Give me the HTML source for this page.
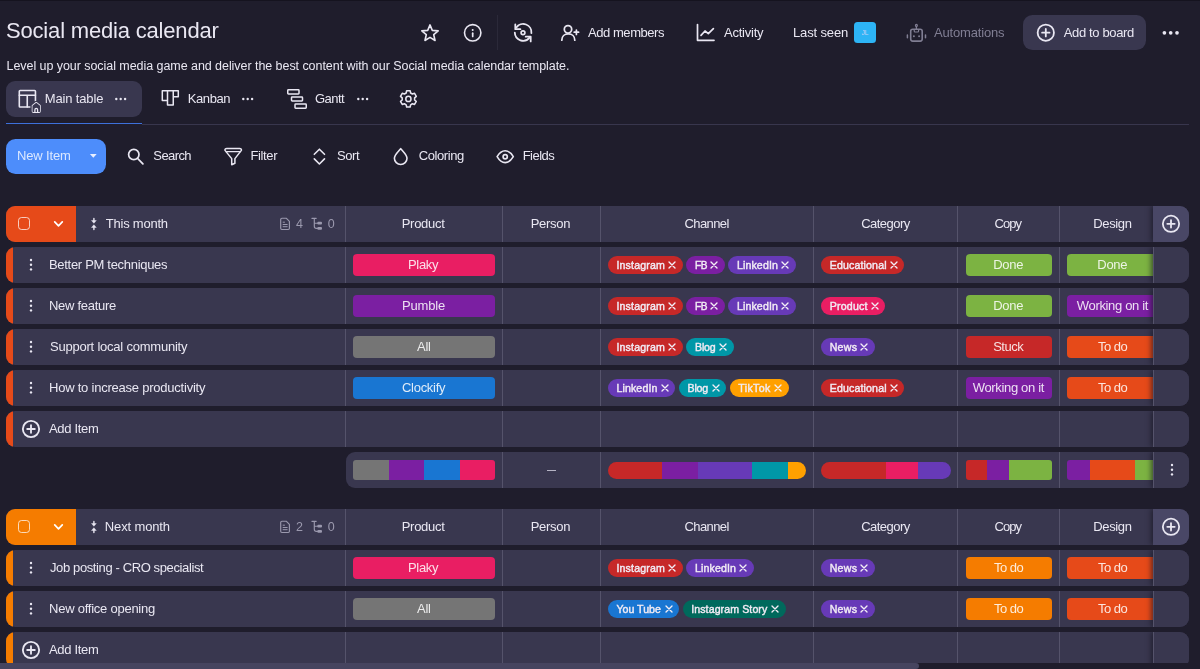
<!DOCTYPE html>
<html lang="en"><head><meta charset="utf-8"><title>Social media calendar</title>
<style>
*{box-sizing:border-box;margin:0;padding:0}
html,body{width:1200px;height:669px;overflow:hidden;background:#1f1d2c;}
body{position:relative;font-family:"Liberation Sans",sans-serif;color:#e9e7f2;-webkit-font-smoothing:antialiased}
.t{position:absolute;white-space:nowrap;display:block}
#w{position:absolute;left:0;top:0;width:1200px;height:669px;overflow:hidden;will-change:transform}
.i{position:absolute;overflow:visible}
.b{position:absolute}
.s{fill:none;stroke:#e9e7f2;stroke-width:1.6;stroke-linecap:round;stroke-linejoin:round}
.row{position:absolute;left:6px;width:1183px;height:36px;background:#39374f;border-radius:9px;overflow:hidden}
.sep{position:absolute;top:0;width:1px;height:36px;background:#55536b}
.pill{position:absolute;height:22px;border-radius:4px;top:7px}
.chip{position:absolute;height:18px;border-radius:9px;top:9px}
.lb{position:absolute;left:0;top:0;width:7.400px;height:36px}
.rc{position:absolute;left:1147px;top:0;width:36px;height:36px;background:#39374f;border-left:1px solid #55536b;box-shadow:-2px 0 5px rgba(20,18,32,.6)}
</style></head><body><div id="w">

<div class="b" style="left:0;top:0;width:1200px;height:1px;background:#15131f"></div>
<span id="title" class="t" style="left:6.00px;top:15.20px;font-size:22px;line-height:31px;color:#e9e7f2;font-weight:400;letter-spacing:-0.181px;">Social media calendar</span>
<div class="b" style="left:497px;top:15px;width:1px;height:35px;background:#2b2939"></div>
<span id="addm" class="t" style="left:588.00px;top:23.70px;font-size:13px;line-height:18px;color:#e9e7f2;font-weight:400;letter-spacing:-0.442px;">Add members</span>
<span id="activity" class="t" style="left:724.00px;top:23.70px;font-size:13px;line-height:18px;color:#e9e7f2;font-weight:400;letter-spacing:-0.239px;">Activity</span>
<span id="lastseen" class="t" style="left:793.00px;top:23.70px;font-size:13px;line-height:18px;color:#e9e7f2;font-weight:400;letter-spacing:-0.143px;">Last seen</span>
<div class="b" style="left:854.4px;top:21.9px;width:21.5px;height:21.6px;border-radius:3.500px;background:#2db4f5"></div>
<span id="jl" class="t" style="left:715.31px;width:300px;text-align:center;top:28.10px;font-size:6.5px;line-height:9px;color:#cfd3f7;font-weight:400;letter-spacing:0.000px;">JL</span>
<span id="autom" class="t" style="left:934.00px;top:23.70px;font-size:13px;line-height:18px;color:#807e93;font-weight:400;letter-spacing:-0.176px;">Automations</span>
<div class="b" style="left:1023.3px;top:15px;width:122.700px;height:35.200px;border-radius:9.500px;background:#39374f"></div>
<span id="addb" class="t" style="left:1063.80px;top:23.70px;font-size:13px;line-height:18px;color:#e9e7f2;font-weight:400;letter-spacing:-0.365px;">Add to board</span>
<span id="sub" class="t" style="left:6.50px;top:56.60px;font-size:12.5px;line-height:18px;color:#e9e7f2;font-weight:400;letter-spacing:-0.054px;">Level up your social media game and deliver the best content with our Social media calendar template.</span>
<div class="b" style="left:6px;top:81px;width:136px;height:36px;border-radius:9px;background:#39374f"></div>
<div class="b" style="left:142px;top:123.5px;width:1047px;height:1px;background:#38364d"></div>
<div class="b" style="left:6px;top:122.900px;width:136px;height:1.500px;background:#3d70db"></div>
<span id="maintable" class="t" style="left:44.70px;top:89.80px;font-size:13px;line-height:18px;color:#e9e7f2;font-weight:400;letter-spacing:-0.139px;">Main table</span>
<span id="kanban" class="t" style="left:187.80px;top:89.80px;font-size:13px;line-height:18px;color:#e9e7f2;font-weight:400;letter-spacing:-0.418px;">Kanban</span>
<span id="gantt" class="t" style="left:315.00px;top:89.80px;font-size:13px;line-height:18px;color:#e9e7f2;font-weight:400;letter-spacing:-0.546px;">Gantt</span>
<div class="b" style="left:6px;top:139px;width:99.700px;height:35.200px;border-radius:9.500px;background:#4d8dfb"></div>
<span id="newitem" class="t" style="left:17.00px;top:147.30px;font-size:13px;line-height:18px;color:#dbe8ff;font-weight:400;letter-spacing:-0.153px;">New Item</span>
<span id="search" class="t" style="left:153.30px;top:147.30px;font-size:13px;line-height:18px;color:#e9e7f2;font-weight:400;letter-spacing:-0.592px;">Search</span>
<span id="filter" class="t" style="left:250.50px;top:147.30px;font-size:13px;line-height:18px;color:#e9e7f2;font-weight:400;letter-spacing:-0.372px;">Filter</span>
<span id="sort" class="t" style="left:337.00px;top:147.30px;font-size:13px;line-height:18px;color:#e9e7f2;font-weight:400;letter-spacing:-0.410px;">Sort</span>
<span id="coloring" class="t" style="left:418.70px;top:147.30px;font-size:13px;line-height:18px;color:#e9e7f2;font-weight:400;letter-spacing:-0.412px;">Coloring</span>
<span id="fields" class="t" style="left:522.70px;top:147.30px;font-size:13px;line-height:18px;color:#e9e7f2;font-weight:400;letter-spacing:-0.535px;">Fields</span>
<div class="row" style="top:206px"><i class="lb" style="width:70px;background:#e64a19"></i><i class="sep" style="left:339px"></i><i class="sep" style="left:496px"></i><i class="sep" style="left:594px"></i><i class="sep" style="left:807px"></i><i class="sep" style="left:951px"></i><i class="sep" style="left:1053px"></i><div class="rc" style="background:#494766;border-left-color:#494766"></div></div>
<div class="b" style="left:17.600px;top:217.4px;width:12.800px;height:12.500px;border:1.300px solid rgba(255,255,255,.720);border-radius:3.500px"></div>
<span id="g1" class="t" style="left:105.80px;top:214.80px;font-size:13px;line-height:18px;color:#e9e7f2;font-weight:400;letter-spacing:-0.230px;">This month</span>
<span id="c2" class="t" style="left:296.00px;top:214.80px;font-size:12.5px;line-height:18px;color:#9b99ae;font-weight:400;letter-spacing:-0.054px;">4</span>
<span id="c3" class="t" style="left:327.80px;top:214.80px;font-size:12.5px;line-height:18px;color:#9b99ae;font-weight:400;letter-spacing:-0.054px;">0</span>
<span id="h4" class="t" style="left:273.18px;width:300px;text-align:center;top:214.80px;font-size:13px;line-height:18px;color:#e9e7f2;font-weight:400;letter-spacing:-0.248px;">Product</span>
<span id="h5" class="t" style="left:400.47px;width:300px;text-align:center;top:214.80px;font-size:13px;line-height:18px;color:#e9e7f2;font-weight:400;letter-spacing:-0.292px;">Person</span>
<span id="h6" class="t" style="left:556.65px;width:300px;text-align:center;top:214.80px;font-size:13px;line-height:18px;color:#e9e7f2;font-weight:400;letter-spacing:-0.590px;">Channel</span>
<span id="h7" class="t" style="left:735.48px;width:300px;text-align:center;top:214.80px;font-size:13px;line-height:18px;color:#e9e7f2;font-weight:400;letter-spacing:-0.536px;">Category</span>
<span id="h8" class="t" style="left:857.80px;width:300px;text-align:center;top:214.80px;font-size:13px;line-height:18px;color:#e9e7f2;font-weight:400;letter-spacing:-0.900px;">Copy</span>
<span id="h9" class="t" style="left:962.44px;width:300px;text-align:center;top:214.80px;font-size:13px;line-height:18px;color:#e9e7f2;font-weight:400;letter-spacing:-0.347px;">Design</span>
<div class="row" style="top:247px"><i class="lb" style="background:#e64a19"></i><i class="sep" style="left:339px"></i><i class="sep" style="left:496px"></i><i class="sep" style="left:594px"></i><i class="sep" style="left:807px"></i><i class="sep" style="left:951px"></i><i class="sep" style="left:1053px"></i><i class="pill" style="left:347px;width:142px;background:#e91e63"></i><i class="pill" style="left:959.5px;width:86.7px;background:#7cb342"></i><i class="pill" style="left:1061px;width:91px;background:#7cb342"></i><div class="rc"></div></div>

<span id="n10" class="t" style="left:49.00px;top:256.00px;font-size:13px;line-height:18px;color:#e9e7f2;font-weight:400;letter-spacing:-0.305px;">Better PM techniques</span>
<span id="p11" class="t" style="left:273.09px;width:300px;text-align:center;top:255.80px;font-size:13px;line-height:18px;color:rgba(255,255,255,.86);font-weight:400;letter-spacing:-0.322px;">Plaky</span>
<span id="s12" class="t" style="left:858.17px;width:300px;text-align:center;top:255.80px;font-size:13px;line-height:18px;color:rgba(255,255,255,.86);font-weight:400;letter-spacing:-0.283px;">Done</span>
<span id="s13" class="t" style="left:962.27px;width:300px;text-align:center;top:255.80px;font-size:13px;line-height:18px;color:rgba(255,255,255,.86);font-weight:400;letter-spacing:-0.283px;">Done</span>
<div class="b" style="left:607.7px;top:256.1px;width:75.1px;height:17.8px;border-radius:9px;background:#c62828"></div><span id="k14" class="t" style="left:616.40px;top:258.10px;font-size:10.6px;line-height:15px;color:#f1ebf4;font-weight:400;letter-spacing:0.165px;-webkit-text-stroke:.42px #f1ebf4;">Instagram</span><svg class="i" style="left:668.3000000000001px;top:261.1px" width="8" height="8" viewBox="0 0 8 8" ><path d="M1 1l6 6M7 1l-6 6" stroke="#f3eef6" stroke-width="1.350" stroke-linecap="round"/></svg><div class="b" style="left:686.3000000000001px;top:256.1px;width:38.4px;height:17.8px;border-radius:9px;background:#7b1fa2"></div><span id="k15" class="t" style="left:695.00px;top:258.60px;font-size:10.1px;line-height:14px;color:#f1ebf4;font-weight:400;letter-spacing:-0.400px;-webkit-text-stroke:.42px #f1ebf4;">FB</span><svg class="i" style="left:710.2px;top:261.1px" width="8" height="8" viewBox="0 0 8 8" ><path d="M1 1l6 6M7 1l-6 6" stroke="#f3eef6" stroke-width="1.350" stroke-linecap="round"/></svg><div class="b" style="left:728.2px;top:256.1px;width:67.6px;height:17.8px;border-radius:9px;background:#673ab7"></div><span id="k16" class="t" style="left:736.90px;top:258.10px;font-size:10.6px;line-height:15px;color:#f1ebf4;font-weight:400;letter-spacing:0.134px;-webkit-text-stroke:.42px #f1ebf4;">LinkedIn</span><svg class="i" style="left:781.3000000000001px;top:261.1px" width="8" height="8" viewBox="0 0 8 8" ><path d="M1 1l6 6M7 1l-6 6" stroke="#f3eef6" stroke-width="1.350" stroke-linecap="round"/></svg>
<div class="b" style="left:821px;top:256.1px;width:83px;height:17.8px;border-radius:9px;background:#c62828"></div><span id="k17" class="t" style="left:829.70px;top:258.10px;font-size:10.6px;line-height:15px;color:#f1ebf4;font-weight:400;letter-spacing:0.149px;-webkit-text-stroke:.42px #f1ebf4;">Educational</span><svg class="i" style="left:889.5px;top:261.1px" width="8" height="8" viewBox="0 0 8 8" ><path d="M1 1l6 6M7 1l-6 6" stroke="#f3eef6" stroke-width="1.350" stroke-linecap="round"/></svg>
<div class="row" style="top:288px"><i class="lb" style="background:#e64a19"></i><i class="sep" style="left:339px"></i><i class="sep" style="left:496px"></i><i class="sep" style="left:594px"></i><i class="sep" style="left:807px"></i><i class="sep" style="left:951px"></i><i class="sep" style="left:1053px"></i><i class="pill" style="left:347px;width:142px;background:#7b1fa2"></i><i class="pill" style="left:959.5px;width:86.7px;background:#7cb342"></i><i class="pill" style="left:1061px;width:91px;background:#7b1fa2"></i><div class="rc"></div></div>

<span id="n18" class="t" style="left:49.00px;top:297.00px;font-size:13px;line-height:18px;color:#e9e7f2;font-weight:400;letter-spacing:-0.286px;">New feature</span>
<span id="p19" class="t" style="left:273.53px;width:300px;text-align:center;top:296.80px;font-size:13px;line-height:18px;color:rgba(255,255,255,.86);font-weight:400;letter-spacing:-0.170px;">Pumble</span>
<span id="s20" class="t" style="left:858.17px;width:300px;text-align:center;top:296.80px;font-size:13px;line-height:18px;color:rgba(255,255,255,.86);font-weight:400;letter-spacing:-0.283px;">Done</span>
<span id="s21" class="t" style="left:962.44px;width:300px;text-align:center;top:296.80px;font-size:13px;line-height:18px;color:rgba(255,255,255,.86);font-weight:400;letter-spacing:-0.335px;clip-path:inset(0 110px 0 0);">Working on it</span>
<div class="b" style="left:607.7px;top:297.1px;width:75.1px;height:17.8px;border-radius:9px;background:#c62828"></div><span id="k22" class="t" style="left:616.40px;top:299.10px;font-size:10.6px;line-height:15px;color:#f1ebf4;font-weight:400;letter-spacing:0.165px;-webkit-text-stroke:.42px #f1ebf4;">Instagram</span><svg class="i" style="left:668.3000000000001px;top:302.1px" width="8" height="8" viewBox="0 0 8 8" ><path d="M1 1l6 6M7 1l-6 6" stroke="#f3eef6" stroke-width="1.350" stroke-linecap="round"/></svg><div class="b" style="left:686.3000000000001px;top:297.1px;width:38.4px;height:17.8px;border-radius:9px;background:#7b1fa2"></div><span id="k23" class="t" style="left:695.00px;top:299.60px;font-size:10.1px;line-height:14px;color:#f1ebf4;font-weight:400;letter-spacing:-0.400px;-webkit-text-stroke:.42px #f1ebf4;">FB</span><svg class="i" style="left:710.2px;top:302.1px" width="8" height="8" viewBox="0 0 8 8" ><path d="M1 1l6 6M7 1l-6 6" stroke="#f3eef6" stroke-width="1.350" stroke-linecap="round"/></svg><div class="b" style="left:728.2px;top:297.1px;width:67.6px;height:17.8px;border-radius:9px;background:#673ab7"></div><span id="k24" class="t" style="left:736.90px;top:299.10px;font-size:10.6px;line-height:15px;color:#f1ebf4;font-weight:400;letter-spacing:0.134px;-webkit-text-stroke:.42px #f1ebf4;">LinkedIn</span><svg class="i" style="left:781.3000000000001px;top:302.1px" width="8" height="8" viewBox="0 0 8 8" ><path d="M1 1l6 6M7 1l-6 6" stroke="#f3eef6" stroke-width="1.350" stroke-linecap="round"/></svg>
<div class="b" style="left:821px;top:297.1px;width:64.4px;height:17.8px;border-radius:9px;background:#e91e63"></div><span id="k25" class="t" style="left:829.70px;top:299.10px;font-size:10.6px;line-height:15px;color:#f1ebf4;font-weight:400;letter-spacing:0.222px;-webkit-text-stroke:.42px #f1ebf4;">Product</span><svg class="i" style="left:870.9px;top:302.1px" width="8" height="8" viewBox="0 0 8 8" ><path d="M1 1l6 6M7 1l-6 6" stroke="#f3eef6" stroke-width="1.350" stroke-linecap="round"/></svg>
<div class="row" style="top:329px"><i class="lb" style="background:#e64a19"></i><i class="sep" style="left:339px"></i><i class="sep" style="left:496px"></i><i class="sep" style="left:594px"></i><i class="sep" style="left:807px"></i><i class="sep" style="left:951px"></i><i class="sep" style="left:1053px"></i><i class="pill" style="left:347px;width:142px;background:#757575"></i><i class="pill" style="left:959.5px;width:86.7px;background:#c62828"></i><i class="pill" style="left:1061px;width:91px;background:#e64a19"></i><div class="rc"></div></div>

<span id="n26" class="t" style="left:50.00px;top:338.00px;font-size:13px;line-height:18px;color:#e9e7f2;font-weight:400;letter-spacing:-0.220px;">Support local community</span>
<span id="p27" class="t" style="left:273.80px;width:300px;text-align:center;top:337.80px;font-size:13px;line-height:18px;color:rgba(255,255,255,.86);font-weight:400;letter-spacing:-0.280px;">All</span>
<span id="s28" class="t" style="left:858.20px;width:300px;text-align:center;top:337.80px;font-size:13px;line-height:18px;color:rgba(255,255,255,.86);font-weight:400;letter-spacing:-0.503px;">Stuck</span>
<span id="s29" class="t" style="left:962.66px;width:300px;text-align:center;top:337.80px;font-size:13px;line-height:18px;color:rgba(255,255,255,.86);font-weight:400;letter-spacing:-0.518px;">To do</span>
<div class="b" style="left:607.7px;top:338.1px;width:75.1px;height:17.8px;border-radius:9px;background:#c62828"></div><span id="k30" class="t" style="left:616.40px;top:340.10px;font-size:10.6px;line-height:15px;color:#f1ebf4;font-weight:400;letter-spacing:0.165px;-webkit-text-stroke:.42px #f1ebf4;">Instagram</span><svg class="i" style="left:668.3000000000001px;top:343.1px" width="8" height="8" viewBox="0 0 8 8" ><path d="M1 1l6 6M7 1l-6 6" stroke="#f3eef6" stroke-width="1.350" stroke-linecap="round"/></svg><div class="b" style="left:686.3000000000001px;top:338.1px;width:47.3px;height:17.8px;border-radius:9px;background:#0097a7"></div><span id="k31" class="t" style="left:695.00px;top:340.10px;font-size:10.6px;line-height:15px;color:#f1ebf4;font-weight:400;letter-spacing:-0.170px;-webkit-text-stroke:.42px #f1ebf4;">Blog</span><svg class="i" style="left:719.1px;top:343.1px" width="8" height="8" viewBox="0 0 8 8" ><path d="M1 1l6 6M7 1l-6 6" stroke="#f3eef6" stroke-width="1.350" stroke-linecap="round"/></svg>
<div class="b" style="left:821px;top:338.1px;width:53.5px;height:17.8px;border-radius:9px;background:#673ab7"></div><span id="k32" class="t" style="left:829.70px;top:340.10px;font-size:10.6px;line-height:15px;color:#f1ebf4;font-weight:400;letter-spacing:0.269px;-webkit-text-stroke:.42px #f1ebf4;">News</span><svg class="i" style="left:860.0px;top:343.1px" width="8" height="8" viewBox="0 0 8 8" ><path d="M1 1l6 6M7 1l-6 6" stroke="#f3eef6" stroke-width="1.350" stroke-linecap="round"/></svg>
<div class="row" style="top:370px"><i class="lb" style="background:#e64a19"></i><i class="sep" style="left:339px"></i><i class="sep" style="left:496px"></i><i class="sep" style="left:594px"></i><i class="sep" style="left:807px"></i><i class="sep" style="left:951px"></i><i class="sep" style="left:1053px"></i><i class="pill" style="left:347px;width:142px;background:#1976d2"></i><i class="pill" style="left:959.5px;width:86.7px;background:#7b1fa2"></i><i class="pill" style="left:1061px;width:91px;background:#e64a19"></i><div class="rc"></div></div>

<span id="n33" class="t" style="left:49.00px;top:379.00px;font-size:13px;line-height:18px;color:#e9e7f2;font-weight:400;letter-spacing:-0.225px;">How to increase productivity</span>
<span id="p34" class="t" style="left:273.61px;width:300px;text-align:center;top:378.80px;font-size:13px;line-height:18px;color:rgba(255,255,255,.86);font-weight:400;letter-spacing:-0.287px;">Clockify</span>
<span id="s35" class="t" style="left:858.34px;width:300px;text-align:center;top:378.80px;font-size:13px;line-height:18px;color:rgba(255,255,255,.86);font-weight:400;letter-spacing:-0.335px;">Working on it</span>
<span id="s36" class="t" style="left:962.66px;width:300px;text-align:center;top:378.80px;font-size:13px;line-height:18px;color:rgba(255,255,255,.86);font-weight:400;letter-spacing:-0.518px;">To do</span>
<div class="b" style="left:607.7px;top:379.1px;width:67.6px;height:17.8px;border-radius:9px;background:#673ab7"></div><span id="k37" class="t" style="left:616.40px;top:381.10px;font-size:10.6px;line-height:15px;color:#f1ebf4;font-weight:400;letter-spacing:0.134px;-webkit-text-stroke:.42px #f1ebf4;">LinkedIn</span><svg class="i" style="left:660.8000000000001px;top:384.1px" width="8" height="8" viewBox="0 0 8 8" ><path d="M1 1l6 6M7 1l-6 6" stroke="#f3eef6" stroke-width="1.350" stroke-linecap="round"/></svg><div class="b" style="left:678.8000000000001px;top:379.1px;width:47.3px;height:17.8px;border-radius:9px;background:#0097a7"></div><span id="k38" class="t" style="left:687.50px;top:381.10px;font-size:10.6px;line-height:15px;color:#f1ebf4;font-weight:400;letter-spacing:-0.170px;-webkit-text-stroke:.42px #f1ebf4;">Blog</span><svg class="i" style="left:711.6px;top:384.1px" width="8" height="8" viewBox="0 0 8 8" ><path d="M1 1l6 6M7 1l-6 6" stroke="#f3eef6" stroke-width="1.350" stroke-linecap="round"/></svg><div class="b" style="left:729.6px;top:379.1px;width:59.2px;height:17.8px;border-radius:9px;background:#ffa000"></div><span id="k39" class="t" style="left:738.30px;top:381.10px;font-size:10.6px;line-height:15px;color:#f1ebf4;font-weight:400;letter-spacing:0.357px;-webkit-text-stroke:.42px #f1ebf4;">TikTok</span><svg class="i" style="left:774.3000000000001px;top:384.1px" width="8" height="8" viewBox="0 0 8 8" ><path d="M1 1l6 6M7 1l-6 6" stroke="#f3eef6" stroke-width="1.350" stroke-linecap="round"/></svg>
<div class="b" style="left:821px;top:379.1px;width:83px;height:17.8px;border-radius:9px;background:#c62828"></div><span id="k40" class="t" style="left:829.70px;top:381.10px;font-size:10.6px;line-height:15px;color:#f1ebf4;font-weight:400;letter-spacing:0.149px;-webkit-text-stroke:.42px #f1ebf4;">Educational</span><svg class="i" style="left:889.5px;top:384.1px" width="8" height="8" viewBox="0 0 8 8" ><path d="M1 1l6 6M7 1l-6 6" stroke="#f3eef6" stroke-width="1.350" stroke-linecap="round"/></svg>
<div class="row" style="top:411px"><i class="lb" style="background:#e64a19"></i><i class="sep" style="left:339px"></i><i class="sep" style="left:496px"></i><i class="sep" style="left:594px"></i><i class="sep" style="left:807px"></i><i class="sep" style="left:951px"></i><i class="sep" style="left:1053px"></i><div class="rc"></div></div>
<span id="a41" class="t" style="left:49.00px;top:420.00px;font-size:13px;line-height:18px;color:#e9e7f2;font-weight:400;letter-spacing:-0.314px;">Add Item</span>
<div class="row" style="top:452px;left:346px;width:843px"><i class="sep" style="left:156px"></i><i class="sep" style="left:254px"></i><i class="sep" style="left:467px"></i><i class="sep" style="left:611px"></i><i class="sep" style="left:713px"></i><div style="position:absolute;left:721px;top:8px;width:91px;height:20px;border-radius:3px;overflow:hidden;display:flex"><i style="flex:1;background:#7b1fa2"></i><i style="flex:2;background:#e64a19"></i><i style="flex:1;background:#7cb342"></i></div><div class="rc" style="left:807px"></div></div>
<div class="b" style="left:353px;top:460px;width:142px;height:20px;border-radius:3px;overflow:hidden;display:flex"><i style="flex:1;background:#757575"></i><i style="flex:1;background:#7b1fa2"></i><i style="flex:1;background:#1976d2"></i><i style="flex:1;background:#e91e63"></i></div>
<div class="b" style="left:547px;top:469.500px;width:8.500px;height:1.300px;background:#b5b3c4"></div>
<div class="b" style="left:608px;top:462px;width:198px;height:17px;border-radius:9px;overflow:hidden;display:flex"><i style="flex:3;background:#c62828"></i><i style="flex:2;background:#7b1fa2"></i><i style="flex:3;background:#673ab7"></i><i style="flex:2;background:#0097a7"></i><i style="flex:1;background:#ffa000"></i></div>
<div class="b" style="left:821px;top:462px;width:129.5px;height:17px;border-radius:9px;overflow:hidden;display:flex"><i style="flex:2;background:#c62828"></i><i style="flex:1;background:#e91e63"></i><i style="flex:1;background:#673ab7"></i></div>
<div class="b" style="left:965.5px;top:460px;width:86.5px;height:20px;border-radius:3px;overflow:hidden;display:flex"><i style="flex:1;background:#c62828"></i><i style="flex:1;background:#7b1fa2"></i><i style="flex:2;background:#7cb342"></i></div>

<div class="row" style="top:509px"><i class="lb" style="width:70px;background:#f57c00"></i><i class="sep" style="left:339px"></i><i class="sep" style="left:496px"></i><i class="sep" style="left:594px"></i><i class="sep" style="left:807px"></i><i class="sep" style="left:951px"></i><i class="sep" style="left:1053px"></i><div class="rc" style="background:#494766;border-left-color:#494766"></div></div>
<div class="b" style="left:17.600px;top:520.4px;width:12.800px;height:12.500px;border:1.300px solid rgba(255,255,255,.720);border-radius:3.500px"></div>
<span id="g42" class="t" style="left:104.80px;top:517.80px;font-size:13px;line-height:18px;color:#e9e7f2;font-weight:400;letter-spacing:-0.138px;">Next month</span>
<span id="c43" class="t" style="left:296.00px;top:517.80px;font-size:12.5px;line-height:18px;color:#9b99ae;font-weight:400;letter-spacing:-0.054px;">2</span>
<span id="c44" class="t" style="left:327.80px;top:517.80px;font-size:12.5px;line-height:18px;color:#9b99ae;font-weight:400;letter-spacing:-0.054px;">0</span>
<span id="h45" class="t" style="left:273.18px;width:300px;text-align:center;top:517.80px;font-size:13px;line-height:18px;color:#e9e7f2;font-weight:400;letter-spacing:-0.248px;">Product</span>
<span id="h46" class="t" style="left:400.47px;width:300px;text-align:center;top:517.80px;font-size:13px;line-height:18px;color:#e9e7f2;font-weight:400;letter-spacing:-0.292px;">Person</span>
<span id="h47" class="t" style="left:556.65px;width:300px;text-align:center;top:517.80px;font-size:13px;line-height:18px;color:#e9e7f2;font-weight:400;letter-spacing:-0.590px;">Channel</span>
<span id="h48" class="t" style="left:735.48px;width:300px;text-align:center;top:517.80px;font-size:13px;line-height:18px;color:#e9e7f2;font-weight:400;letter-spacing:-0.536px;">Category</span>
<span id="h49" class="t" style="left:857.80px;width:300px;text-align:center;top:517.80px;font-size:13px;line-height:18px;color:#e9e7f2;font-weight:400;letter-spacing:-0.900px;">Copy</span>
<span id="h50" class="t" style="left:962.44px;width:300px;text-align:center;top:517.80px;font-size:13px;line-height:18px;color:#e9e7f2;font-weight:400;letter-spacing:-0.347px;">Design</span>
<div class="row" style="top:550px"><i class="lb" style="background:#f57c00"></i><i class="sep" style="left:339px"></i><i class="sep" style="left:496px"></i><i class="sep" style="left:594px"></i><i class="sep" style="left:807px"></i><i class="sep" style="left:951px"></i><i class="sep" style="left:1053px"></i><i class="pill" style="left:347px;width:142px;background:#e91e63"></i><i class="pill" style="left:959.5px;width:86.7px;background:#f57c00"></i><i class="pill" style="left:1061px;width:91px;background:#e64a19"></i><div class="rc"></div></div>

<span id="n51" class="t" style="left:50.00px;top:559.00px;font-size:13px;line-height:18px;color:#e9e7f2;font-weight:400;letter-spacing:-0.385px;">Job posting - CRO specialist</span>
<span id="p52" class="t" style="left:273.09px;width:300px;text-align:center;top:558.80px;font-size:13px;line-height:18px;color:rgba(255,255,255,.86);font-weight:400;letter-spacing:-0.322px;">Plaky</span>
<span id="s53" class="t" style="left:858.56px;width:300px;text-align:center;top:558.80px;font-size:13px;line-height:18px;color:rgba(255,255,255,.86);font-weight:400;letter-spacing:-0.518px;">To do</span>
<span id="s54" class="t" style="left:962.66px;width:300px;text-align:center;top:558.80px;font-size:13px;line-height:18px;color:rgba(255,255,255,.86);font-weight:400;letter-spacing:-0.518px;">To do</span>
<div class="b" style="left:607.7px;top:559.1px;width:75.1px;height:17.8px;border-radius:9px;background:#c62828"></div><span id="k55" class="t" style="left:616.40px;top:561.10px;font-size:10.6px;line-height:15px;color:#f1ebf4;font-weight:400;letter-spacing:0.165px;-webkit-text-stroke:.42px #f1ebf4;">Instagram</span><svg class="i" style="left:668.3000000000001px;top:564.1px" width="8" height="8" viewBox="0 0 8 8" ><path d="M1 1l6 6M7 1l-6 6" stroke="#f3eef6" stroke-width="1.350" stroke-linecap="round"/></svg><div class="b" style="left:686.3000000000001px;top:559.1px;width:67.6px;height:17.8px;border-radius:9px;background:#673ab7"></div><span id="k56" class="t" style="left:695.00px;top:561.10px;font-size:10.6px;line-height:15px;color:#f1ebf4;font-weight:400;letter-spacing:0.134px;-webkit-text-stroke:.42px #f1ebf4;">LinkedIn</span><svg class="i" style="left:739.4000000000001px;top:564.1px" width="8" height="8" viewBox="0 0 8 8" ><path d="M1 1l6 6M7 1l-6 6" stroke="#f3eef6" stroke-width="1.350" stroke-linecap="round"/></svg>
<div class="b" style="left:821px;top:559.1px;width:53.5px;height:17.8px;border-radius:9px;background:#673ab7"></div><span id="k57" class="t" style="left:829.70px;top:561.10px;font-size:10.6px;line-height:15px;color:#f1ebf4;font-weight:400;letter-spacing:0.269px;-webkit-text-stroke:.42px #f1ebf4;">News</span><svg class="i" style="left:860.0px;top:564.1px" width="8" height="8" viewBox="0 0 8 8" ><path d="M1 1l6 6M7 1l-6 6" stroke="#f3eef6" stroke-width="1.350" stroke-linecap="round"/></svg>
<div class="row" style="top:591px"><i class="lb" style="background:#f57c00"></i><i class="sep" style="left:339px"></i><i class="sep" style="left:496px"></i><i class="sep" style="left:594px"></i><i class="sep" style="left:807px"></i><i class="sep" style="left:951px"></i><i class="sep" style="left:1053px"></i><i class="pill" style="left:347px;width:142px;background:#757575"></i><i class="pill" style="left:959.5px;width:86.7px;background:#f57c00"></i><i class="pill" style="left:1061px;width:91px;background:#e64a19"></i><div class="rc"></div></div>

<span id="n58" class="t" style="left:49.00px;top:600.00px;font-size:13px;line-height:18px;color:#e9e7f2;font-weight:400;letter-spacing:-0.241px;">New office opening</span>
<span id="p59" class="t" style="left:273.80px;width:300px;text-align:center;top:599.80px;font-size:13px;line-height:18px;color:rgba(255,255,255,.86);font-weight:400;letter-spacing:-0.280px;">All</span>
<span id="s60" class="t" style="left:858.56px;width:300px;text-align:center;top:599.80px;font-size:13px;line-height:18px;color:rgba(255,255,255,.86);font-weight:400;letter-spacing:-0.518px;">To do</span>
<span id="s61" class="t" style="left:962.66px;width:300px;text-align:center;top:599.80px;font-size:13px;line-height:18px;color:rgba(255,255,255,.86);font-weight:400;letter-spacing:-0.518px;">To do</span>
<div class="b" style="left:607.7px;top:600.1px;width:71.3px;height:17.8px;border-radius:9px;background:#1976d2"></div><span id="k62" class="t" style="left:616.40px;top:602.10px;font-size:10.6px;line-height:15px;color:#f1ebf4;font-weight:400;letter-spacing:0.017px;-webkit-text-stroke:.42px #f1ebf4;">You Tube</span><svg class="i" style="left:664.5px;top:605.1px" width="8" height="8" viewBox="0 0 8 8" ><path d="M1 1l6 6M7 1l-6 6" stroke="#f3eef6" stroke-width="1.350" stroke-linecap="round"/></svg><div class="b" style="left:682.5px;top:600.1px;width:103.3px;height:17.8px;border-radius:9px;background:#00695c"></div><span id="k63" class="t" style="left:691.20px;top:602.10px;font-size:10.6px;line-height:15px;color:#f1ebf4;font-weight:400;letter-spacing:0.095px;-webkit-text-stroke:.42px #f1ebf4;">Instagram Story</span><svg class="i" style="left:771.3px;top:605.1px" width="8" height="8" viewBox="0 0 8 8" ><path d="M1 1l6 6M7 1l-6 6" stroke="#f3eef6" stroke-width="1.350" stroke-linecap="round"/></svg>
<div class="b" style="left:821px;top:600.1px;width:53.5px;height:17.8px;border-radius:9px;background:#673ab7"></div><span id="k64" class="t" style="left:829.70px;top:602.10px;font-size:10.6px;line-height:15px;color:#f1ebf4;font-weight:400;letter-spacing:0.269px;-webkit-text-stroke:.42px #f1ebf4;">News</span><svg class="i" style="left:860.0px;top:605.1px" width="8" height="8" viewBox="0 0 8 8" ><path d="M1 1l6 6M7 1l-6 6" stroke="#f3eef6" stroke-width="1.350" stroke-linecap="round"/></svg>
<div class="row" style="top:632px"><i class="lb" style="background:#f57c00"></i><i class="sep" style="left:339px"></i><i class="sep" style="left:496px"></i><i class="sep" style="left:594px"></i><i class="sep" style="left:807px"></i><i class="sep" style="left:951px"></i><i class="sep" style="left:1053px"></i><div class="rc"></div></div>
<span id="a65" class="t" style="left:49.00px;top:641.00px;font-size:13px;line-height:18px;color:#e9e7f2;font-weight:400;letter-spacing:-0.314px;">Add Item</span>
<div class="b" style="left:0;top:663px;width:1200px;height:6px;background:#1f1d2c"></div>
<div class="b" style="left:0;top:663.300px;width:919px;height:6px;border-radius:0 4px 4px 0;background:#46445f"></div>
<svg class="i" style="left:0;top:0" width="1200" height="669" viewBox="0 0 1200 669"><path d="M430.00 24.90L432.29 30.34L438.18 30.84L433.71 34.71L435.05 40.46L430.00 37.40L424.95 40.46L426.29 34.71L421.82 30.84L427.71 30.34Z" fill="none" stroke="#e9e7f2" stroke-width="1.6" stroke-linecap="round" stroke-linejoin="round" /><circle cx="472.7" cy="32.8" r="8.2" fill="none" stroke="#e9e7f2" stroke-width="1.6"/><path d="M472.7 33.2V36.4" fill="none" stroke="#e9e7f2" stroke-width="1.7" stroke-linecap="round" stroke-linejoin="round" /><circle cx="472.7" cy="30.1" r="1.0" fill="#e9e7f2"/><path d="M516.3 27.6A8.3 8.3 0 0 1 531.4 33.2" fill="none" stroke="#e9e7f2" stroke-width="1.8" stroke-linecap="round" stroke-linejoin="round" /><path d="M514.8 32.6A8.3 8.3 0 0 0 529.6 37.6" fill="none" stroke="#e9e7f2" stroke-width="1.8" stroke-linecap="round" stroke-linejoin="round" /><path d="M515.3 24.5V29.2H520.4" fill="none" stroke="#e9e7f2" stroke-width="1.8" stroke-linecap="round" stroke-linejoin="round" /><path d="M525.700 36.700H530.700V41.400" fill="none" stroke="#e9e7f2" stroke-width="1.8" stroke-linecap="round" stroke-linejoin="round" /><circle cx="523" cy="32.7" r="1.9" fill="none" stroke="#e9e7f2" stroke-width="1.7"/><circle cx="568" cy="29.3" r="3.7" fill="none" stroke="#e9e7f2" stroke-width="1.75"/><path d="M561.8 40.2C561.8 36.4 564.6 33.9 568.3 33.9S574.8 36.4 574.8 40.2" fill="none" stroke="#e9e7f2" stroke-width="1.75" stroke-linecap="round" stroke-linejoin="round" /><path d="M576.4 30V34.4M574.2 32.2H578.6" fill="none" stroke="#e9e7f2" stroke-width="1.7" stroke-linecap="round" stroke-linejoin="round" /><path d="M697.5 24.5V40.3H714" fill="none" stroke="#e9e7f2" stroke-width="1.7" stroke-linecap="round" stroke-linejoin="round" /><path d="M701 35.3L705 31L708.3 33.7L713.4 28.700" fill="none" stroke="#e9e7f2" stroke-width="1.7" stroke-linecap="round" stroke-linejoin="round" /><rect x="910.7" y="29.3" width="11.50" height="11.80" rx="2" fill="none" stroke="#807e93" stroke-width="1.6" stroke-linejoin="round"/><circle cx="916.4" cy="25.4" r="1.0" fill="none" stroke="#807e93" stroke-width="1.1"/><path d="M916.4 26.7V29" fill="none" stroke="#807e93" stroke-width="1.3" stroke-linecap="round" stroke-linejoin="round" /><path d="M914.2 30V31.1Q914.2 32 915.1 32H917.700Q918.6 32 918.6 31.1V30" fill="none" stroke="#807e93" stroke-width="1.2" stroke-linecap="round" stroke-linejoin="round" /><circle cx="913.9" cy="36.2" r="0.95" fill="#807e93"/><circle cx="919.1" cy="36.2" r="0.95" fill="#807e93"/><path d="M907.4 34.9V37.7M925.5 34.9V37.7" fill="none" stroke="#807e93" stroke-width="1.5" stroke-linecap="round" stroke-linejoin="round" /><circle cx="1045.8" cy="32.7" r="8.15" fill="none" stroke="#e9e7f2" stroke-width="1.8"/><path d="M1045.8 29.000000000000004V36.400000000000006M1042.1 32.7H1049.5" fill="none" stroke="#e9e7f2" stroke-width="1.8" stroke-linecap="round" stroke-linejoin="round" /><circle cx="1164.4" cy="32.8" r="1.85" fill="#e9e7f2"/><circle cx="1170.7" cy="32.8" r="1.85" fill="#e9e7f2"/><circle cx="1177" cy="32.8" r="1.85" fill="#e9e7f2"/><path d="M35.45 101V91.35Q35.45 90.55 34.65 90.55H20.1Q19.3 90.55 19.3 91.35V106.2Q19.3 107 20.1 107H30" fill="none" stroke="#e9e7f2" stroke-width="1.6" stroke-linecap="round" stroke-linejoin="round" /><path d="M19.3 95.200H35.45M27.25 95.200V107" fill="none" stroke="#e9e7f2" stroke-width="1.6" stroke-linecap="round" stroke-linejoin="round" /><path d="M36.25 102.700L40 105.700V112.100H32.500V105.700Z" fill="#39374f" stroke="#39374f" stroke-width="3.600" stroke-linejoin="round"/><path d="M36.25 102.700L40 105.700V111.200Q40 112.100 39.1 112.100H33.400Q32.500 112.100 32.500 111.200V105.700Z" fill="#39374f" stroke="#e9e7f2" stroke-width="1.55" stroke-linecap="round" stroke-linejoin="round" style="paint-order:stroke"/><path d="M34.9 112V109.800A1.350 1.350 0 0 1 37.6 109.800V112" fill="none" stroke="#e9e7f2" stroke-width="1.3" stroke-linecap="round" stroke-linejoin="round" /><circle cx="116.3" cy="99" r="1.2" fill="#e9e7f2"/><circle cx="120.7" cy="99" r="1.2" fill="#e9e7f2"/><circle cx="125.1" cy="99" r="1.2" fill="#e9e7f2"/><path d="M162.3 90.800H178.3V96.800H173.25V105H167.5V100.500H162.3ZM167.5 90.800V100.500M173.25 90.800V96.800" fill="none" stroke="#e9e7f2" stroke-width="1.5" stroke-linecap="round" stroke-linejoin="round" stroke-linecap="butt"/><circle cx="243.3" cy="99" r="1.2" fill="#e9e7f2"/><circle cx="247.70000000000002" cy="99" r="1.2" fill="#e9e7f2"/><circle cx="252.10000000000002" cy="99" r="1.2" fill="#e9e7f2"/><rect x="287.75" y="89.75" width="11.25" height="4.25" rx="0.7" fill="none" stroke="#e9e7f2" stroke-width="1.5" stroke-linejoin="round"/><rect x="291.5" y="97" width="11.00" height="4.00" rx="0.7" fill="none" stroke="#e9e7f2" stroke-width="1.5" stroke-linejoin="round"/><rect x="295" y="104" width="11.25" height="4.25" rx="0.7" fill="none" stroke="#e9e7f2" stroke-width="1.5" stroke-linejoin="round"/><circle cx="358.3" cy="99" r="1.2" fill="#e9e7f2"/><circle cx="362.7" cy="99" r="1.2" fill="#e9e7f2"/><circle cx="367.1" cy="99" r="1.2" fill="#e9e7f2"/><path d="M406.18 93.00L406.67 90.78L410.13 90.78L410.62 93.00L412.40 94.03L414.56 93.34L416.30 96.34L414.62 97.87L414.62 99.93L416.30 101.46L414.56 104.46L412.40 103.77L410.62 104.80L410.13 107.02L406.67 107.02L406.18 104.80L404.40 103.77L402.24 104.46L400.50 101.46L402.18 99.93L402.18 97.87L400.50 96.34L402.24 93.34L404.40 94.03Z" fill="none" stroke="#e9e7f2" stroke-width="1.55" stroke-linecap="round" stroke-linejoin="round" /><circle cx="408.4" cy="98.9" r="2.6" fill="none" stroke="#e9e7f2" stroke-width="1.5"/><path d="M89.900 153.900H96.700L93.300 157.700Z" fill="#e8efff"/><circle cx="133.8" cy="154.5" r="5.2" fill="none" stroke="#e9e7f2" stroke-width="1.7"/><path d="M137.700 158.500L142.900 163.900" fill="none" stroke="#e9e7f2" stroke-width="1.8" stroke-linecap="round" stroke-linejoin="round" /><path d="M225 150.400Q224.700 148.600 226.800 148.600H239.600Q241.700 148.600 241.400 150.400L234.900 158.600V163.300L231.700 164.800V158.600Z" fill="none" stroke="#e9e7f2" stroke-width="1.5" stroke-linecap="round" stroke-linejoin="round" /><path d="M226.300 151.700H240.100" fill="none" stroke="#e9e7f2" stroke-width="1.2" stroke-linecap="round" stroke-linejoin="round" /><path d="M314.3 154.3L319.4 149.200L324.500 154.300M314.300 158.900L319.400 164L324.500 158.900" fill="none" stroke="#e9e7f2" stroke-width="1.6" stroke-linecap="round" stroke-linejoin="round" /><path d="M400.700 148.700C403.500 152 407 155 407 158.200A6.300 6.300 0 0 1 394.400 158.200C394.400 155 397.900 152 400.700 148.700Z" fill="none" stroke="#e9e7f2" stroke-width="1.6" stroke-linecap="round" stroke-linejoin="round" /><path d="M497.100 156.700C499.300 153 502 150.800 505.200 150.800S511.100 153 513.300 156.700C511.100 160.400 508.400 162.600 505.200 162.600S499.300 160.400 497.100 156.700Z" fill="none" stroke="#e9e7f2" stroke-width="1.6" stroke-linecap="round" stroke-linejoin="round" /><circle cx="505.2" cy="156.7" r="2.1" fill="none" stroke="#e9e7f2" stroke-width="1.7"/><path d="M54.700 221.9L58.500 225.8L62.300 221.9" fill="none" stroke="#fff" stroke-width="1.7" stroke-linecap="round" stroke-linejoin="round" /><path d="M93.9 218.4V221.5M93.9 226.5V229.6" fill="none" stroke="#e9e7f2" stroke-width="1.4" stroke-linecap="round" stroke-linejoin="round" /><path d="M91.5 220.5H96.30000000000001L93.9 223.3ZM91.5 227.5H96.30000000000001L93.9 224.7Z" fill="#e9e7f2" stroke="#e9e7f2" stroke-width=".4" stroke-linejoin="round"/><path d="M280.700 219.4Q280.700 218.2 281.900 218.2H286.200L289.400 221.4V228.3Q289.400 229.5 288.200 229.5H281.900Q280.700 229.5 280.700 228.3Z" fill="none" stroke="#9b99ae" stroke-width="1.15" stroke-linecap="round" stroke-linejoin="round" /><path d="M283.100 224.5H287.200M283.100 226.7H287.200M283.100 222.2H284.500" fill="none" stroke="#9b99ae" stroke-width="1.0" stroke-linecap="round" stroke-linejoin="round" /><path d="M311.900 218.3H316.200M314.300 218.3V226.2Q314.300 228.3 316.400 228.3H317.500M314.300 223.2H317.500" fill="none" stroke="#9b99ae" stroke-width="1.15" stroke-linecap="round" stroke-linejoin="round" /><rect x="317.300" y="221.8" width="4.700" height="2.800" rx="1" fill="#9b99ae"/><rect x="317.300" y="226.9" width="4.700" height="2.800" rx="1" fill="#9b99ae"/><circle cx="1171" cy="223.8" r="8.15" fill="none" stroke="#e9e7f2" stroke-width="1.8"/><path d="M1171 220.10000000000002V227.5M1167.3 223.8H1174.7" fill="none" stroke="#e9e7f2" stroke-width="1.8" stroke-linecap="round" stroke-linejoin="round" /><circle cx="31" cy="260.0" r="1.2" fill="#e9e7f2"/><circle cx="31" cy="264.7" r="1.2" fill="#e9e7f2"/><circle cx="31" cy="269.4" r="1.2" fill="#e9e7f2"/><circle cx="31" cy="301.0" r="1.2" fill="#e9e7f2"/><circle cx="31" cy="305.7" r="1.2" fill="#e9e7f2"/><circle cx="31" cy="310.4" r="1.2" fill="#e9e7f2"/><circle cx="31" cy="342.0" r="1.2" fill="#e9e7f2"/><circle cx="31" cy="346.7" r="1.2" fill="#e9e7f2"/><circle cx="31" cy="351.4" r="1.2" fill="#e9e7f2"/><circle cx="31" cy="383.0" r="1.2" fill="#e9e7f2"/><circle cx="31" cy="387.7" r="1.2" fill="#e9e7f2"/><circle cx="31" cy="392.4" r="1.2" fill="#e9e7f2"/><circle cx="31" cy="429" r="8.15" fill="none" stroke="#e9e7f2" stroke-width="1.85"/><path d="M31 425.2V432.8M27.2 429H34.8" fill="none" stroke="#e9e7f2" stroke-width="1.85" stroke-linecap="round" stroke-linejoin="round" /><circle cx="1172" cy="465.0" r="1.2" fill="#e9e7f2"/><circle cx="1172" cy="469.7" r="1.2" fill="#e9e7f2"/><circle cx="1172" cy="474.4" r="1.2" fill="#e9e7f2"/><path d="M54.700 524.9L58.500 528.8L62.300 524.9" fill="none" stroke="#fff" stroke-width="1.7" stroke-linecap="round" stroke-linejoin="round" /><path d="M93.9 521.4V524.5M93.9 529.5V532.6" fill="none" stroke="#e9e7f2" stroke-width="1.4" stroke-linecap="round" stroke-linejoin="round" /><path d="M91.5 523.5H96.30000000000001L93.9 526.3ZM91.5 530.5H96.30000000000001L93.9 527.7Z" fill="#e9e7f2" stroke="#e9e7f2" stroke-width=".4" stroke-linejoin="round"/><path d="M280.700 522.4Q280.700 521.2 281.900 521.2H286.200L289.400 524.4V531.3Q289.400 532.5 288.200 532.5H281.900Q280.700 532.5 280.700 531.3Z" fill="none" stroke="#9b99ae" stroke-width="1.15" stroke-linecap="round" stroke-linejoin="round" /><path d="M283.100 527.5H287.200M283.100 529.7H287.200M283.100 525.2H284.500" fill="none" stroke="#9b99ae" stroke-width="1.0" stroke-linecap="round" stroke-linejoin="round" /><path d="M311.900 521.3H316.200M314.300 521.3V529.2Q314.300 531.3 316.400 531.3H317.500M314.300 526.2H317.500" fill="none" stroke="#9b99ae" stroke-width="1.15" stroke-linecap="round" stroke-linejoin="round" /><rect x="317.300" y="524.8" width="4.700" height="2.800" rx="1" fill="#9b99ae"/><rect x="317.300" y="529.9" width="4.700" height="2.800" rx="1" fill="#9b99ae"/><circle cx="1171" cy="526.8" r="8.15" fill="none" stroke="#e9e7f2" stroke-width="1.8"/><path d="M1171 523.0999999999999V530.5M1167.3 526.8H1174.7" fill="none" stroke="#e9e7f2" stroke-width="1.8" stroke-linecap="round" stroke-linejoin="round" /><circle cx="31" cy="563.0" r="1.2" fill="#e9e7f2"/><circle cx="31" cy="567.7" r="1.2" fill="#e9e7f2"/><circle cx="31" cy="572.4" r="1.2" fill="#e9e7f2"/><circle cx="31" cy="604.0" r="1.2" fill="#e9e7f2"/><circle cx="31" cy="608.7" r="1.2" fill="#e9e7f2"/><circle cx="31" cy="613.4" r="1.2" fill="#e9e7f2"/><circle cx="31" cy="650" r="8.15" fill="none" stroke="#e9e7f2" stroke-width="1.85"/><path d="M31 646.2V653.8M27.2 650H34.8" fill="none" stroke="#e9e7f2" stroke-width="1.85" stroke-linecap="round" stroke-linejoin="round" /></svg>
</div></body></html>
